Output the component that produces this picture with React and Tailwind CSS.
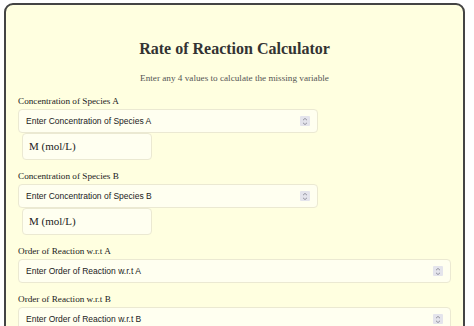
import React from "react";

const Spinner = () => (
  <div className="w-[10px] h-[10px] bg-[#e4e4ec] rounded-[1px] flex items-center justify-center">
    <svg width="8" height="9" viewBox="0 0 8 9" fill="none" stroke="#8a8a96" strokeWidth="0.9">
      <path d="M2 3.2 L4 1.4 L6 3.2" />
      <path d="M2 5.8 L4 7.6 L6 5.8" />
    </svg>
  </div>
);

const Field = ({ label, placeholder, unit, wide }) => (
  <div className="mb-[10px]">
    <div className="text-[9.2px] leading-[12px] text-[#222] mb-[2px]">{label}</div>
    <div
      className={`h-[24px] ${wide ? "w-full" : "w-[300px]"} border border-[#ebe9d2] bg-[#fffff0] rounded-[4px] flex items-center justify-between pl-[7px] pr-[7px]`}
    >
      <span className="text-[8.5px] text-[#222]" style={{ fontFamily: '"Liberation Sans", Arial, sans-serif' }}>
        {placeholder}
      </span>
      <Spinner />
    </div>
    {unit && (
      <div className="ml-[4px] w-[130px] h-[27px] border border-[#ebe9d2] bg-[#fffff0] rounded-[4px] flex items-center pl-[6px] text-[11px] text-[#222]">
        {unit}
      </div>
    )}
  </div>
);

export default function App() {
  return (
    <div className="w-[474px] h-[326px] overflow-hidden bg-white pt-[3px] pl-[4px]" style={{ fontFamily: '"Liberation Serif", "Times New Roman", serif' }}>
      <div className="w-[461px] h-[400px] border-2 border-[#444] rounded-[9px] bg-[#ffffe0] px-[12px] pt-[34px]">
        <h1 className="text-[16px] leading-[20px] font-bold text-[#333] text-center">Rate of Reaction Calculator</h1>
        <p className="mt-[13px] text-[9.2px] leading-[12px] text-[#555] text-center">
          Enter any 4 values to calculate the missing variable
        </p>
        <div className="mt-[11px]">
          <Field label="Concentration of Species A" placeholder="Enter Concentration of Species A" unit="M (mol/L)" />
          <Field label="Concentration of Species B" placeholder="Enter Concentration of Species B" unit="M (mol/L)" />
          <Field label="Order of Reaction w.r.t A" placeholder="Enter Order of Reaction w.r.t A" wide />
          <Field label="Order of Reaction w.r.t B" placeholder="Enter Order of Reaction w.r.t B" wide />
        </div>
      </div>
    </div>
  );
}
